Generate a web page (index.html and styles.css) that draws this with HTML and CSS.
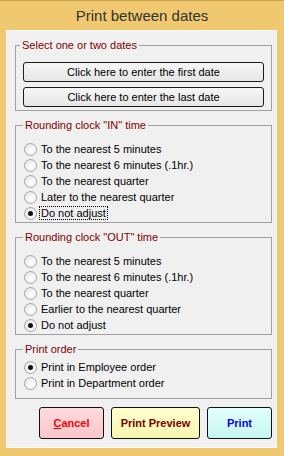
FILE: index.html
```html
<!DOCTYPE html>
<html lang="en">
<head>
  <meta charset="UTF-8" />
  <title>Print between dates</title>
  <link rel="stylesheet" href="styles.css">
</head>
<body>
  <div class="window">
    <h1 class="title">Print between dates</h1>

    <div class="panel">
      <!-- Dates -->
      <fieldset class="group group-dates">
        <legend>Select one or two dates</legend>
        <button type="button" class="date-btn">Click here to enter the first date</button>
        <button type="button" class="date-btn">Click here to enter the last date</button>
      </fieldset>

      <!-- Clock in -->
      <fieldset class="group group-in">
        <legend>Rounding clock "IN" time</legend>
        <label class="opt"><span class="radio"></span>To the nearest 5 minutes</label>
        <label class="opt"><span class="radio"></span>To the nearest 6 minutes (.1hr.)</label>
        <label class="opt"><span class="radio"></span>To the nearest quarter</label>
        <label class="opt"><span class="radio"></span>Later to the nearest quarter</label>
        <label class="opt"><span class="radio checked"></span><span class="focused">Do not adjust</span></label>
      </fieldset>

      <!-- Clock out -->
      <fieldset class="group group-out">
        <legend>Rounding clock "OUT" time</legend>
        <label class="opt"><span class="radio"></span>To the nearest 5 minutes</label>
        <label class="opt"><span class="radio"></span>To the nearest 6 minutes (.1hr.)</label>
        <label class="opt"><span class="radio"></span>To the nearest quarter</label>
        <label class="opt"><span class="radio"></span>Earlier to the nearest quarter</label>
        <label class="opt"><span class="radio checked"></span>Do not adjust</label>
      </fieldset>

      <!-- Order -->
      <fieldset class="group group-order">
        <legend>Print order</legend>
        <label class="opt"><span class="radio checked"></span>Print in Employee order</label>
        <label class="opt"><span class="radio"></span>Print in Department order</label>
      </fieldset>

      <div class="actions">
        <button type="button" class="btn btn-cancel"><u>C</u>ancel</button>
        <button type="button" class="btn btn-preview">Print Preview</button>
        <button type="button" class="btn btn-print">Print</button>
      </div>
    </div>
  </div>
</body>
</html>
```

FILE: styles.css
```css
* { box-sizing: border-box; }
body {
  margin: 0;
  font-family: "Liberation Sans", Arial, sans-serif;
  font-size: 11px;
  color: #000;
}
.window {
  width: 284px;
  height: 456px;
  background: #f0c870;
  border-top: 1px solid #c9a24e;
}
.title {
  margin: 0;
  height: 29px;
  line-height: 29px;
  font-size: 15px;
  font-weight: normal;
  text-align: center;
  color: #333;
}
.panel {
  margin-left: 6px;
  width: 271px;
  height: 418px;
  background: #f0f0f0;
  border: 1px solid #fbfbfb;
  padding: 8px 4px 8px 8px;
}
.group {
  margin: 0 0 8px 0;
  padding: 0;
  min-width: 0;
  border: 1px solid #a0a0a0;
}
.group legend {
  margin-left: 7px;
  padding: 0 2px;
  height: 13px;
  line-height: 13px;
  color: #800000;
}
.group-dates { padding: 10px 0 3px; margin-bottom: 8px; }
.group-dates legend { margin-left: 4px; }
.group-in { padding: 9px 0 1px; }
.group-out { padding: 9px 0 1px; }
.group-order { padding: 3px 0 7px; }

.date-btn {
  display: block;
  width: 241px;
  height: 20px;
  margin: 0 7px;
  padding: 0;
  font: inherit;
  color: #000;
  border: 1px solid #1a1a1a;
  border-radius: 3px;
  background: linear-gradient(#f6f6f6, #e6e6e6);
}
.date-btn + .date-btn { margin-top: 5px; }

.opt {
  display: flex;
  align-items: center;
  height: 16px;
  padding-left: 8px;
  white-space: nowrap;
}
.radio {
  width: 13px;
  height: 13px;
  margin-right: 4px;
  border-radius: 50%;
  border: 1px solid #a4a4a4;
  background: radial-gradient(circle at 65% 65%, #ffffff 0, #f4f4f4 45%, #dcdcdc 100%);
  display: flex;
  align-items: center;
  justify-content: center;
  flex: none;
}
.radio.checked::after {
  content: "";
  width: 5px;
  height: 5px;
  border-radius: 50%;
  background: #111;
}
.focused { outline: 1px dotted #000; padding: 0 1px; margin-left: -1px; }

.actions {
  display: flex;
  justify-content: flex-end;
  gap: 7px;
}
.btn {
  height: 32px;
  padding: 0;
  font: bold 11px "Liberation Sans", Arial, sans-serif;
  border: 1px solid #111;
  border-radius: 3px;
}
.btn-cancel {
  width: 65px;
  color: #ff0000;
  background: linear-gradient(#ffdadd, #fcc6ca);
}
.btn-preview {
  width: 89px;
  color: #800000;
  background: linear-gradient(#ffffcc, #f6f6b0);
}
.btn-print {
  width: 65px;
  color: #0000ff;
  background: linear-gradient(#e2ffff, #c6f6f0);
}
```
